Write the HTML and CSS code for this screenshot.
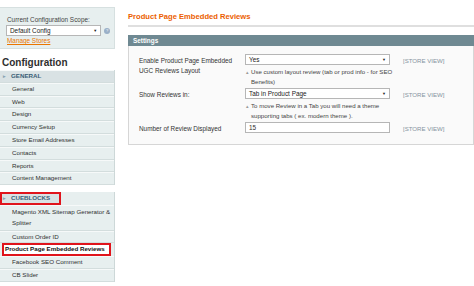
FILE: index.html
```html
<!DOCTYPE html>
<html>
<head>
<meta charset="utf-8">
<title>Configuration</title>
<link rel="stylesheet" href="styles.css">
</head>
<body>
<div class="page">
  <div class="side">
    <div class="scope">
      <div class="scope-label">Current Configuration Scope:</div>
      <div class="scope-row">
        <div class="sel scope-sel">Default Config<span class="arr">&#9660;</span></div>
        <span class="help">?</span>
      </div>
      <a class="manage" href="#">Manage Stores</a>
    </div>
    <div class="side-title">Configuration</div>
    <ul class="tabs">
      <li class="grp"><span class="tri">&#9656;</span>GENERAL</li>
      <li>General</li>
      <li>Web</li>
      <li>Design</li>
      <li>Currency Setup</li>
      <li>Store Email Addresses</li>
      <li>Contacts</li>
      <li>Reports</li>
      <li>Content Management</li>
    </ul>
    <ul class="tabs">
      <li class="grp mark"><span class="tri">&#9656;</span>CUEBLOCKS</li>
      <li class="two">Magento XML Sitemap Generator &amp; Splitter</li>
      <li>Custom Order ID</li>
      <li class="cur mark">Product Page Embedded Reviews</li>
      <li>Facebook SEO Comment</li>
      <li>CB Slider</li>
    </ul>
  </div>
  <div class="main">
    <h3 class="head">Product Page Embedded Reviews</h3>
    <div class="box">
      <div class="box-head">Settings</div>
      <div class="box-body">
        <div class="row">
          <div class="lbl">Enable Product Page Embedded UGC Reviews Layout</div>
          <div class="val">
            <div class="sel">Yes<span class="arr">&#9660;</span></div>
            <p class="note"><span class="up">&#9652;</span>Use custom layout review (tab or prod info - for SEO Benefits)</p>
          </div>
          <div class="scp">[STORE VIEW]</div>
        </div>
        <div class="row">
          <div class="lbl">Show Reviews in:</div>
          <div class="val">
            <div class="sel">Tab in Product Page<span class="arr">&#9660;</span></div>
            <p class="note"><span class="up">&#9652;</span>To move Review in a Tab you will need a theme supporting tabs ( ex. modern theme ).</p>
          </div>
          <div class="scp">[STORE VIEW]</div>
        </div>
        <div class="row">
          <div class="lbl">Number of Review Displayed</div>
          <div class="val">
            <div class="inp">15</div>
          </div>
          <div class="scp">[STORE VIEW]</div>
        </div>
      </div>
    </div>
  </div>
</div>
</body>
</html>
```
FILE: styles.css
```css
body{
	margin:0;
	background:#fff;
	font-family:"Liberation Sans", Arial, sans-serif;
	font-size:6.4px;
	color:#2f2f2f;
	}
.page{
	display:flex;
	height:286px;
	overflow:hidden;
	}
.side{
	width:115px;
	flex:none;
	}
.scope{
	margin-top:7px;
	background:#e7efef;
	border:1px solid #d6e0e0;
	border-left:none;
	padding:8px 4px 5px 7px;
	height:27px;
	}
.scope-label{
	color:#444;
	line-height:8px;
	}
.scope-row{
	display:flex;
	align-items:center;
	margin-top:1px;
	}
.sel{
	position:relative;
	height:9px;
	line-height:9px;
	background:#fff;
	border:1px solid #b6b6b6;
	padding-left:3px;
	color:#222;
	}
.scope-sel{
	width:94px;
	margin-left:-1px;
	}
.arr{
	position:absolute;
	right:3px;
	top:0;
	font-size:4px;
	}
.help{
	width:6px;
	height:6px;
	margin-left:3px;
	border-radius:50%;
	background:#9ab0c8;
	color:#fff;
	font-size:4px;
	line-height:6px;
	text-align:center;
	}
.manage{
	display:block;
	margin-top:1px;
	color:#ea7601;
	text-decoration:underline;
	line-height:8px;
	}
.side-title{
	margin-top:8px;
	padding-left:2px;
	font-weight:bold;
	font-size:10px;
	color:#2f2f2f;
	line-height:12px;
	}
.tabs{
	list-style:none;
	margin:1px 0 0 0;
	padding:0;
	background:#e7efef;
	border-right:1px solid #cdd8d8;
	}
.tabs + .tabs{
	margin-top:7px;
	}
.tabs li{
	padding:0 0 0 12px;
	font-size:6.2px;
	line-height:10.8px;
	border-bottom:1px solid #d3dddd;
	border-top:1px solid #f6f9f9;
	}
.tabs .two{
	padding-top:1px;
	padding-bottom:1px;
	}
.tabs .grp{
	position:relative;
	padding-left:11px;
	background:#d9e2e4;
	color:#3a5f76;
	font-weight:bold;
	}
.tri{
	position:absolute;
	left:3px;
	color:#8aa2b2;
	font-size:5px;
	}
.tabs .cur{
	font-weight:bold;
	color:#111;
	background:#fff;
	margin:0 3px 0 2px;
	padding-left:3px;
	}
.mark{
	outline:2px solid #e0141c;
	outline-offset:-2px;
	}
.tabs .grp.mark{
	margin-right:53px;
	}
.main{
	flex:1;
	margin-left:13px;
	}
.head{
	margin:11px 0 0 0;
	padding-bottom:3px;
	border-bottom:2px solid #dfdfdf;
	color:#eb5e00;
	font-size:7.6px;
	line-height:11px;
	}
.box{
	margin-top:8px;
	}
.box-head{
	background:#6f8992;
	color:#fff;
	font-weight:bold;
	padding-left:5px;
	line-height:11px;
	}
.box-body{
	background:#fafafa;
	border:1px solid #d6d6d6;
	border-top:none;
	padding:8px 0 9px 10px;
	}
.row{
	display:flex;
	margin-bottom:1px;
	}
.lbl{
	width:106px;
	flex:none;
	padding-top:2px;
	line-height:10px;
	color:#333;
	}
.val{
	width:145px;
	flex:none;
	}
.inp{
	height:9px;
	line-height:9px;
	background:#fff;
	border:1px solid #b6b6b6;
	padding-left:3px;
	}
.note{
	margin:2px -8px 0 0;
	padding-left:6px;
	position:relative;
	font-size:6.1px;
	line-height:10px;
	color:#444;
	}
.up{
	position:absolute;
	left:1px;
	color:#999;
	font-size:5px;
	}
.scp{
	margin-left:13px;
	padding-top:2px;
	line-height:10px;
	font-size:6.1px;
	color:#8593a0;
	}
```
